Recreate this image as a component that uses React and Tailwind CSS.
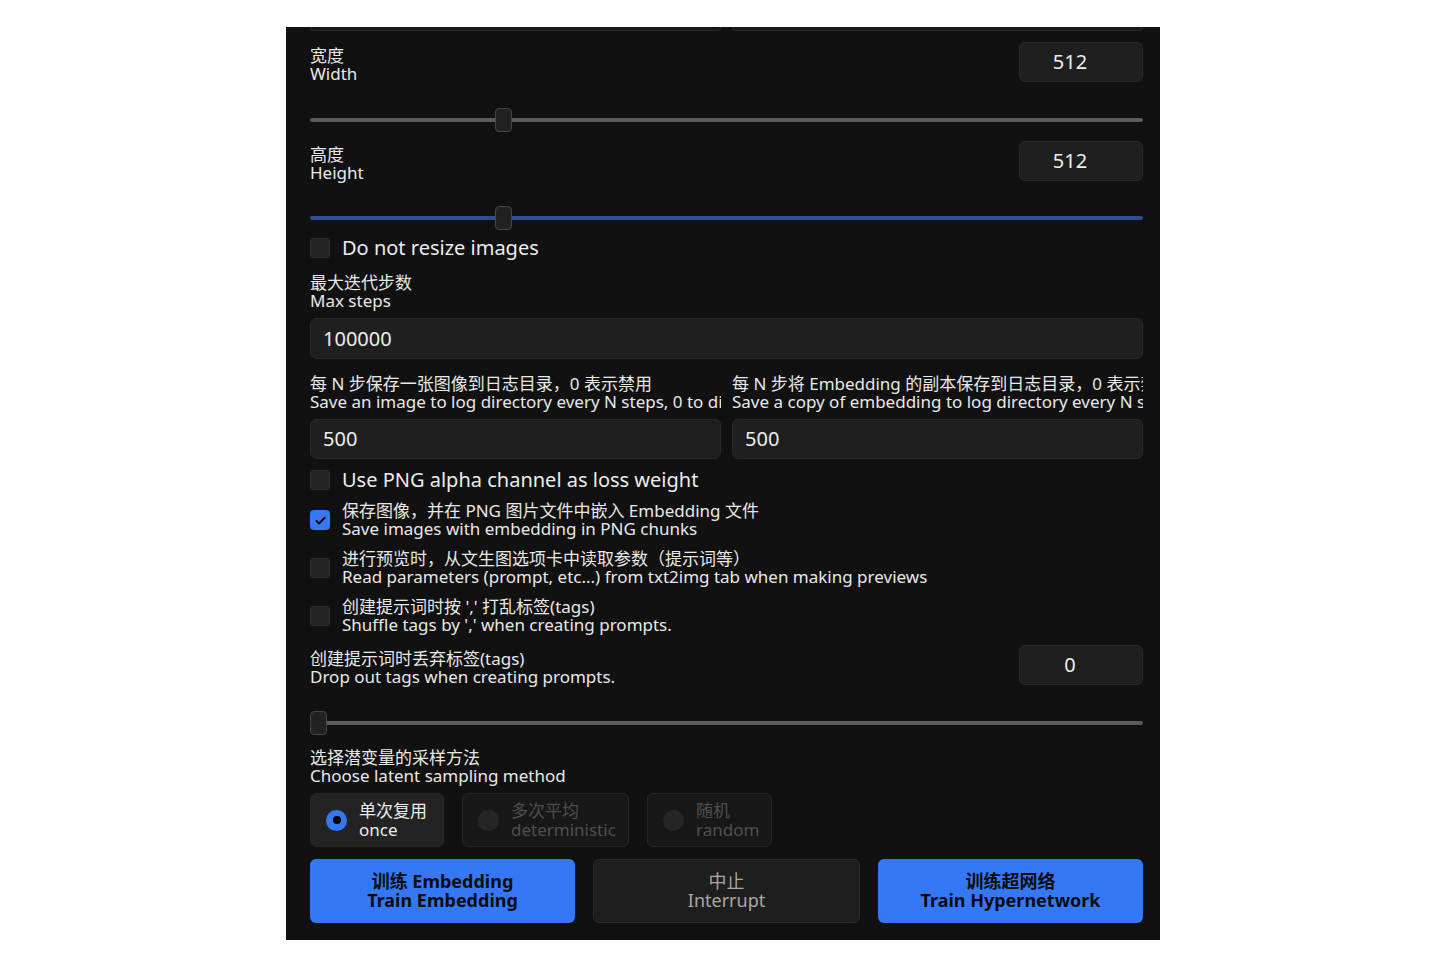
import React from "react";

const FONT = { fontFamily: '"Noto Sans", "Noto Sans CJK SC", sans-serif' };

function Label({ zh, en, className = "" }) {
  return (
    <div className={"text-[17px] leading-[18px] text-[#e8e8e8] whitespace-nowrap overflow-x-clip " + className}>
      <div>{zh}</div>
      <div>{en}</div>
    </div>
  );
}

function NumBox({ value }) {
  return (
    <div className="w-[124px] h-[40px] rounded-md bg-[#1f1f1f] border border-[#292929] flex items-center justify-center pr-[22px] text-[20px] text-[#eeeeee]">
      {value}
    </div>
  );
}

function Slider({ pct, blue }) {
  return (
    <div className="relative h-[24px]">
      <div
        className={
          "absolute left-0 right-0 top-[10px] h-[4px] rounded-full " +
          (blue ? "bg-[#2c4f94]" : "bg-[#5c5c5c]")
        }
      />
      <div
        className="absolute top-0 w-[17px] h-[24px] rounded-[4px] bg-[#222222] border border-[#474747]"
        style={{ left: `${pct}%` }}
      />
    </div>
  );
}

function Box({ checked }) {
  return checked ? (
    <div className="w-[20px] h-[20px] shrink-0 rounded-[4px] bg-[#3478f6] flex items-center justify-center">
      <svg width="13" height="13" viewBox="0 0 16 16" fill="none">
        <path d="M3 8.5l3.2 3.2L13 4.8" stroke="#000" strokeWidth="2.4" strokeLinecap="round" strokeLinejoin="round" />
      </svg>
    </div>
  ) : (
    <div className="w-[20px] h-[20px] shrink-0 rounded-[4px] bg-[#242424] border border-[#2e2e2e]" />
  );
}

function Check1({ text, className = "" }) {
  return (
    <div className={"flex items-center gap-[12px] h-[20px] " + className}>
      <Box />
      <span className="text-[20px] leading-[24px] text-[#ececec] whitespace-nowrap">{text}</span>
    </div>
  );
}

function Check2({ zh, en, checked, className = "" }) {
  return (
    <div className={"flex items-center gap-[12px] " + className}>
      <Box checked={checked} />
      <div className="text-[17px] leading-[18px] text-[#e8e8e8] whitespace-nowrap">
        <div>{zh}</div>
        <div>{en}</div>
      </div>
    </div>
  );
}

function Radio({ zh, en, active, w }) {
  return (
    <div
      className={
        "h-[54px] rounded-md flex items-center gap-[12px] pl-[15px] " +
        (active ? "bg-[#232323] border border-[#262626]" : "bg-[#181818] border border-[#262626]")
      }
      style={{ width: w }}
    >
      {active ? (
        <div className="w-[21px] h-[21px] rounded-full bg-[#3478f6] flex items-center justify-center">
          <div className="w-[8px] h-[8px] rounded-full bg-black" />
        </div>
      ) : (
        <div className="w-[21px] h-[21px] rounded-full bg-[#262626]" />
      )}
      <div className={"text-[17px] leading-[19px] " + (active ? "text-[#ececec]" : "text-[#4f4f4f]")}>
        <div>{zh}</div>
        <div>{en}</div>
      </div>
    </div>
  );
}

function Btn({ zh, en, primary }) {
  return (
    <div
      className={
        "flex-1 h-[64px] rounded-md flex flex-col items-center justify-center text-[18px] leading-[19px] " +
        (primary
          ? "bg-[#3478f6] text-[#0d0d0d] font-bold"
          : "bg-[#1e1e1e] border border-[#2a2a2a] text-[#a8a8a8]")
      }
    >
      <div>{zh}</div>
      <div>{en}</div>
    </div>
  );
}

export default function App() {
  return (
    <div className="min-h-[959px] bg-white pt-[27px]" style={FONT}>
      <div className="ml-[286px] w-[874px] bg-[#111111] pl-[24px] pr-[17px] pb-[17px] flex flex-col">
        <div className="flex gap-[11px] h-[4px]">
          <div className="flex-1 rounded-b-md bg-[#191919] border-b border-x border-[#262626]" />
          <div className="flex-1 rounded-b-md bg-[#191919] border-b border-x border-[#262626]" />
        </div>

        <div className="mt-[11px] flex justify-between items-start">
          <Label zh="宽度" en="Width" className="mt-[5px]" />
          <NumBox value="512" />
        </div>
        <div className="mt-[25px]">
          <Slider pct={22.2} />
        </div>

        <div className="mt-[9px] flex justify-between items-start">
          <Label zh="高度" en="Height" className="mt-[5px]" />
          <NumBox value="512" />
        </div>
        <div className="mt-[24px]">
          <Slider pct={22.2} blue />
        </div>

        <Check1 text="Do not resize images" className="mt-[8px]" />

        <Label zh="最大迭代步数" en="Max steps" className="mt-[16px]" />
        <div className="mt-[8px] h-[41px] rounded-md bg-[#1f1f1f] border border-[#292929] flex items-center pl-[12px] text-[20px] text-[#eeeeee]">
          100000
        </div>

        <div className="mt-[16px] grid grid-cols-2 gap-x-[11px]">
          <div className="min-w-0">
            <Label zh="每 N 步保存一张图像到日志目录，0 表示禁用" en="Save an image to log directory every N steps, 0 to disable" />
            <div className="mt-[8px] h-[40px] rounded-md bg-[#1f1f1f] border border-[#292929] flex items-center pl-[12px] text-[20px] text-[#eeeeee]">
              500
            </div>
          </div>
          <div className="min-w-0">
            <Label zh="每 N 步将 Embedding 的副本保存到日志目录，0 表示禁用" en="Save a copy of embedding to log directory every N steps, 0 to disable" />
            <div className="mt-[8px] h-[40px] rounded-md bg-[#1f1f1f] border border-[#292929] flex items-center pl-[12px] text-[20px] text-[#eeeeee]">
              500
            </div>
          </div>
        </div>

        <Check1 text="Use PNG alpha channel as loss weight" className="mt-[11px]" />
        <Check2
          checked
          zh="保存图像，并在 PNG 图片文件中嵌入 Embedding 文件"
          en="Save images with embedding in PNG chunks"
          className="mt-[12px]"
        />
        <Check2
          zh="进行预览时，从文生图选项卡中读取参数（提示词等）"
          en="Read parameters (prompt, etc...) from txt2img tab when making previews"
          className="mt-[12px]"
        />
        <Check2
          zh="创建提示词时按 ',' 打乱标签(tags)"
          en="Shuffle tags by ',' when creating prompts."
          className="mt-[12px]"
        />

        <div className="mt-[11px] flex justify-between items-start">
          <Label zh="创建提示词时丢弃标签(tags)" en="Drop out tags when creating prompts." className="mt-[5px]" />
          <NumBox value="0" />
        </div>
        <div className="mt-[25px]">
          <Slider pct={0} />
        </div>

        <Label zh="选择潜变量的采样方法" en="Choose latent sampling method" className="mt-[14px]" />
        <div className="mt-[8px] flex gap-[18px]">
          <Radio active zh="单次复用" en="once" w={134} />
          <Radio zh="多次平均" en="deterministic" w={167} />
          <Radio zh="随机" en="random" w={125} />
        </div>

        <div className="mt-[12px] flex gap-[18px]">
          <Btn primary zh="训练 Embedding" en="Train Embedding" />
          <Btn zh="中止" en="Interrupt" />
          <Btn primary zh="训练超网络" en="Train Hypernetwork" />
        </div>
      </div>
    </div>
  );
}
